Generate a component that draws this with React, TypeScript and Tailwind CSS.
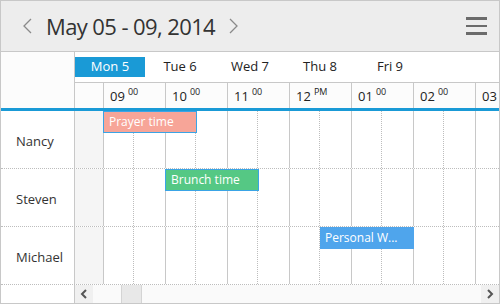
const hours: [string, string][] = [
  ["09", "00"],
  ["10", "00"],
  ["11", "00"],
  ["12", "PM"],
  ["01", "00"],
  ["02", "00"],
  ["03", "00"],
];

const days = ["Mon 5", "Tue 6", "Wed 7", "Thu 8", "Fri 9"];

type Ev = { title: string; left: number; width: number; cls: string };

const rows: { name: string; ev: Ev }[] = [
  { name: "Nancy", ev: { title: "Prayer time", left: 28, width: 94, cls: "bg-[#f7a598] border border-[#3aa4e6]" } },
  { name: "Steven", ev: { title: "Brunch time", left: 90, width: 94, cls: "bg-[#55c884] border border-[#3aa4e6]" } },
  { name: "Michael", ev: { title: "Personal W...", left: 245, width: 94, cls: "bg-[#4fa5ec]" } },
];

function Slots() {
  return (
    <div className="flex h-full">
      <div className="h-full w-[28px] shrink-0 bg-[#f5f5f5]" />
      {hours.map((h) => (
        <div key={h[0]} className="flex h-full w-[62px] shrink-0 border-l border-[#c8c8c8]">
          <div className="h-full w-[30px] border-r border-dotted border-[#bdbdbd]" />
        </div>
      ))}
    </div>
  );
}

export default function App() {
  return (
    <div
      className="flex h-[304px] w-[500px] flex-col overflow-hidden border border-[#c8c8c8] bg-white text-[#333]"
      style={{ fontFamily: '"Open Sans", "Noto Sans", sans-serif' }}
    >
      {/* toolbar */}
      <div className="flex h-[51px] shrink-0 items-center border-b border-[#c8c8c8] bg-[#ededed]">
        <svg width="12" height="16" viewBox="0 0 12 16" className="ml-[20px]">
          <path d="M10 1 L3 8 L10 15" fill="none" stroke="#8a8a8a" strokeWidth="1.3" />
        </svg>
        <span className="ml-[13px] text-[22px] leading-none tracking-[-0.6px] text-[#333]">May 05 - 09, 2014</span>
        <svg width="12" height="16" viewBox="0 0 12 16" className="ml-[13px]">
          <path d="M2 1 L9 8 L2 15" fill="none" stroke="#8a8a8a" strokeWidth="1.3" />
        </svg>
        <div className="ml-auto mr-[12px] flex w-[21px] flex-col gap-[5px]">
          <div className="h-[2.5px] bg-[#6b6b6b]" />
          <div className="h-[2.5px] bg-[#6b6b6b]" />
          <div className="h-[2.5px] bg-[#6b6b6b]" />
        </div>
      </div>

      {/* header rows */}
      <div className="flex h-[56px] shrink-0">
        <div className="w-[74px] shrink-0 border-r border-[#c8c8c8] bg-[#fcfcfc]" />
        <div className="flex-1 overflow-hidden">
          <div className="flex h-[31px] items-start border-b border-[#c8c8c8] pt-[5px]">
            {days.map((d, i) => (
              <div
                key={d}
                className={
                  "flex h-[20px] w-[70px] shrink-0 items-center justify-center text-[13px] " +
                  (i === 0 ? "bg-[#1a9ad6] text-white" : "text-[#222]")
                }
              >
                {d}
              </div>
            ))}
          </div>
          <div className="flex h-[25px] bg-[#fcfcfc]">
            <div className="w-[28px] shrink-0" />
            {hours.map((h) => (
              <div key={h[0]} className="flex w-[62px] shrink-0 items-start border-l border-[#c8c8c8] pl-[6px] pt-[4px] text-[13px] leading-[18px] text-[#222]">
                {h[0]}
                <span className="ml-[3px] -mt-[4px] text-[9px]">{h[1]}</span>
              </div>
            ))}
          </div>
        </div>
      </div>

      <div className="h-[3px] shrink-0 bg-[#1a9ad6]" />

      {/* body */}
      <div className="flex shrink-0 flex-col">
        {rows.map((r) => (
          <div key={r.name} className="flex h-[58px] border-b border-dotted border-[#bdbdbd]">
            <div className="flex w-[74px] shrink-0 items-center border-r border-[#c8c8c8] pl-[15px] pt-[4px] text-[13px]">
              {r.name}
            </div>
            <div className="relative flex-1 overflow-hidden">
              <Slots />
              <div
                className={"absolute top-0 flex h-[22px] items-center pl-[5px] text-[12px] text-white " + r.ev.cls}
                style={{ left: r.ev.left, width: r.ev.width }}
              >
                {r.ev.title}
              </div>
            </div>
          </div>
        ))}
      </div>

      {/* scrollbar */}
      <div className="flex flex-1">
        <div className="w-[74px] shrink-0 border-r border-[#c8c8c8]" />
        <div className="flex flex-1 bg-[#fafafa]">
          <div className="flex w-[18px] items-center justify-center bg-[#f0f0f0]">
            <svg width="8" height="10" viewBox="0 0 8 10">
              <path d="M6 1 L2 5 L6 9" fill="none" stroke="#555" strokeWidth="2" />
            </svg>
          </div>
          <div className="ml-[28px] w-[21px] border-x border-[#d4d4d4] bg-[#e8e8e8]" />
          <div className="ml-auto flex w-[18px] items-center justify-center bg-[#f0f0f0]">
            <svg width="8" height="10" viewBox="0 0 8 10">
              <path d="M2 1 L6 5 L2 9" fill="none" stroke="#555" strokeWidth="2" />
            </svg>
          </div>
        </div>
      </div>
    </div>
  );
}
